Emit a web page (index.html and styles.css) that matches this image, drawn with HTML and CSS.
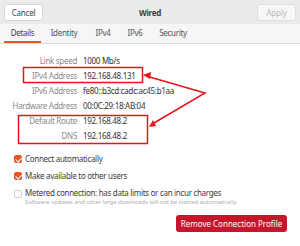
FILE: index.html
```html
<!DOCTYPE html>
<html>
<head>
<meta charset="utf-8">
<link rel="stylesheet" href="styles.css">
</head>
<body>
<div class="window">
  <header class="headerbar">
    <button class="btn">Cancel</button>
    <div class="title">Wired</div>
    <button class="btn disabled">Apply</button>
  </header>
  <nav class="tabs">
    <span class="tab active t1">Details</span>
    <span class="tab t2">Identity</span>
    <span class="tab t3">IPv4</span>
    <span class="tab t3">IPv6</span>
    <span class="tab t4">Security</span>
  </nav>
  <main class="content">
    <div class="details">
      <div class="label">Link speed</div><div class="value">1000 Mb/s</div>
      <div class="label">IPv4 Address</div><div class="value">192.168.48.131</div>
      <div class="label">IPv6 Address</div><div class="value">fe80::b3cd:cadc:ac45:b1aa</div>
      <div class="label">Hardware Address</div><div class="value">00:0C:29:18:AB:04</div>
      <div class="label">Default Route</div><div class="value">192.168.48.2</div>
      <div class="label">DNS</div><div class="value">192.168.48.2</div>
    </div>
    <div class="checks">
      <label class="check"><span class="box on"></span><span>Connect automatically</span></label>
      <label class="check"><span class="box on"></span><span>Make available to other users</span></label>
      <label class="check metered"><span class="box"></span>
        <span class="text"><span>Metered connection: has data limits or can incur charges</span><span class="sub">Software updates and other large downloads will not be started automatically.</span></span>
      </label>
    </div>
    <div class="actions">
      <button class="danger">Remove Connection Profile</button>
    </div>
  </main>
  <svg class="annot" width="300" height="246" viewBox="0 0 300 246">
    <rect x="23.5" y="67.5" width="119" height="15" fill="none" stroke="#e8141a" stroke-width="1.5"/>
    <rect x="18.5" y="115.5" width="129" height="28" fill="none" stroke="#e8141a" stroke-width="1.5"/>
    <polyline points="148,76.5 205,93 154,123" fill="none" stroke="#e8141a" stroke-width="1.5"/>
    <polygon points="143,75 151,72 150,79" fill="#e8141a"/>
    <polygon points="149,127 153,120 156,126" fill="#e8141a"/>
  </svg>
</div>
</body>
</html>
```
FILE: styles.css
```css
* { box-sizing: border-box; }
html, body { margin: 0; padding: 0; background: #fff; }
body { font-family: "Noto Sans", "Open Sans", sans-serif; font-size: 8px; letter-spacing: -0.3px; color: #3d3d3d; }
.window { position: relative; width: 300px; height: 246px; overflow: hidden; background: #fff; }
.headerbar {
  height: 24px; background: #ebebeb; display: flex; align-items: center;
  justify-content: space-between; padding: 0 4px 0 4px;
}
.btn {
  font: inherit; font-size: 8px; letter-spacing: -0.2px; color: #3d3d3d; background: #fff;
  border: 1px solid #d6d6d6; border-radius: 3px; height: 17px; width: 39px; padding: 0;
}
.btn.disabled { color: #b8b8b8; background: #f7f7f7; border-color: #dedede; }
.title { font-weight: bold; font-size: 8px; color: #3d3d3d; }
.tabs {
  height: 20px; display: flex; align-items: stretch; background: #f6f6f6;
  border-bottom: 1px solid #dcdcdc; padding-left: 4px;
}
.tab {
  display: flex; align-items: center; justify-content: center;
  color: #555; border-bottom: 2px solid transparent; white-space: nowrap;
}
.t1 { width: 37px; }
.t2 { width: 46px; }
.t3 { width: 32px; }
.t4 { width: 44px; }
.tab.active { color: #3d3d3d; border-bottom-color: #e95420; }
.content { padding-top: 9px; }
.details {
  display: grid; grid-template-columns: 77px auto; column-gap: 6px;
  grid-auto-rows: 15px; align-items: center; white-space: nowrap;
}
.label { text-align: right; color: #8a8a8a; }
.value { color: #333; }
.checks { padding: 7px 0 0 14px; display: flex; flex-direction: column; }
.check { display: flex; align-items: center; gap: 3px; height: 17px; white-space: nowrap; }
.check.metered { align-items: flex-start; height: auto; padding-top: 4px; }
.box {
  width: 8px; height: 8px; border-radius: 2px; border: 1px solid #cfcfcf; background: #fff;
  flex: none; position: relative;
}
.box.on { background: #e95420; border-color: #e95420; }
.box.on::after {
  content: ""; position: absolute; left: 1.5px; top: 0px; width: 2.5px; height: 4.5px;
  border: solid #fff; border-width: 0 1.2px 1.2px 0; transform: rotate(45deg);
}
.metered .box { margin-top: 2px; }
.text { display: flex; flex-direction: column; line-height: 10px; }
.sub { font-size: 6px; letter-spacing: -0.1px; color: #b0b0b0; line-height: 8px; }
.actions { display: flex; justify-content: flex-end; padding: 9px 13px 0 0; }
.danger {
  font: inherit; font-size: 8px; color: #fff; background: #c7162b; border: none;
  border-radius: 3px; height: 17px; width: 111px; padding: 0;
}
.annot { position: absolute; left: 0; top: 0; pointer-events: none; }
```
